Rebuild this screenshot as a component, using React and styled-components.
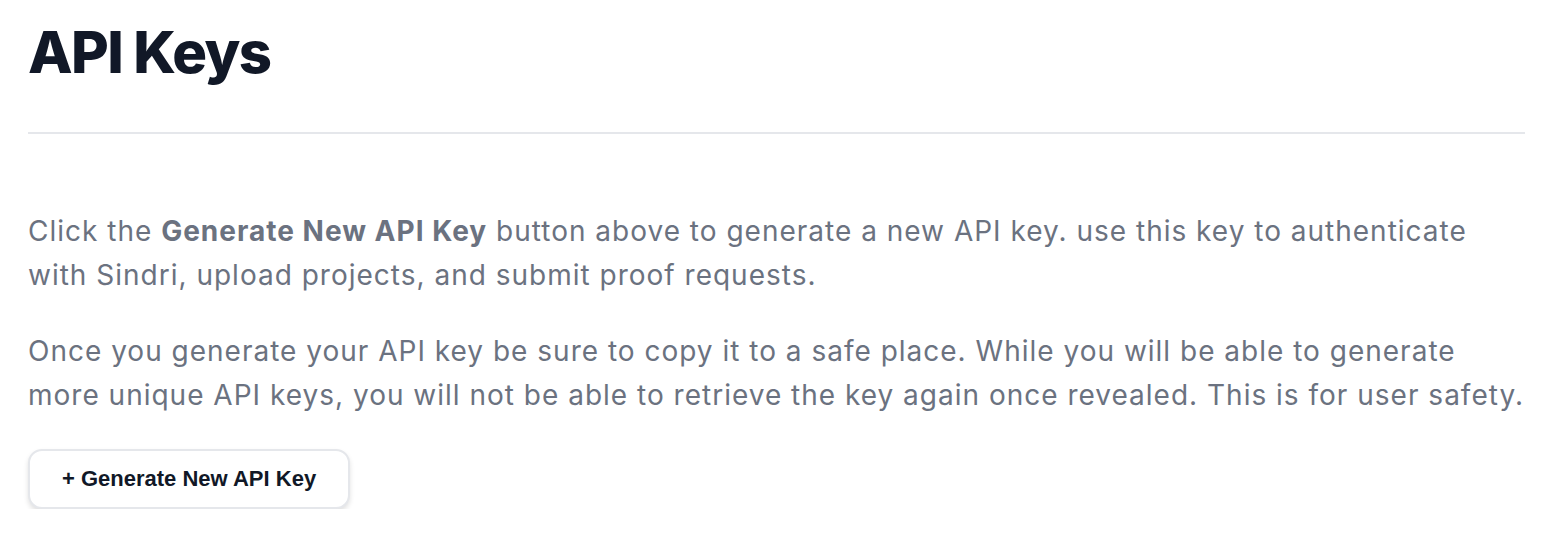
import React from 'react';
import styled, {createGlobalStyle} from 'styled-components';

const GlobalStyle = createGlobalStyle`
  * {
    box-sizing: border-box;
  }
  body {
    margin: 0;
    background: #ffffff;
    font-family: Inter, 'Noto Sans', sans-serif;
  }
`;

function App() {
  return (
    <>
      <GlobalStyle />
      <Wrapper>
        <Title>API Keys</Title>
        <Divider />
        <Text>
          Click the <strong>Generate New API Key</strong> button above to
          generate a new API key. use this key to authenticate with Sindri,
          upload projects, and submit proof requests.
        </Text>
        <Text>
          Once you generate your API key be sure to copy it to a safe place.
          While you will be able to generate more unique API keys, you will not
          be able to retrieve the key again once revealed. This is for user
          safety.
        </Text>
        <Button type="button">+ Generate New API Key</Button>
      </Wrapper>
    </>
  );
}

const Wrapper = styled.main`
  padding: 16px 19px 0 28px;
  display: flex;
  flex-direction: column;
  align-items: flex-start;
`;

const Title = styled.h1`
  margin: 0;
  font-size: 58px;
  line-height: 72px;
  font-weight: 800;
  letter-spacing: -1.6px;
  color: #111827;
`;

const Divider = styled.hr`
  align-self: stretch;
  margin: 44px 0 75px;
  border: none;
  border-top: 2px solid #e5e7eb;
`;

const Text = styled.p`
  margin: 0 0 32px;
  font-size: 28px;
  line-height: 44px;
  letter-spacing: 1px;
  color: #6b7280;

  strong {
    font-weight: 700;
    letter-spacing: 1px;
  }
`;

const Button = styled.button`
  padding: 16px 32px;
  font-family: 'Liberation Sans', Arial, sans-serif;
  font-size: 22px;
  line-height: 24px;
  font-weight: 700;
  color: #111827;
  background: #ffffff;
  border: 2px solid #e5e7eb;
  border-radius: 14px;
  box-shadow: 0 3px 5px rgba(0, 0, 0, 0.12);
  cursor: pointer;
`;

export default App;
